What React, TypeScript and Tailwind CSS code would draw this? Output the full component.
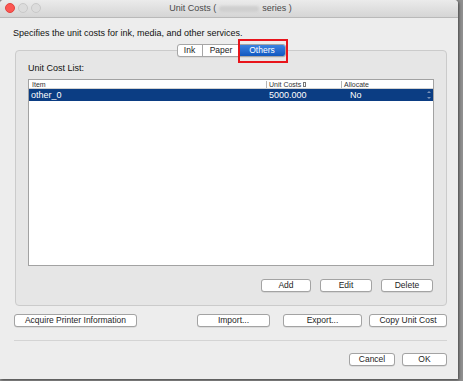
import React from 'react';

const font = { fontFamily: '"Liberation Sans", Arial, sans-serif' };

function MacButton({ label, className = '' }: { label: string; className?: string }) {
  return (
    <button
      className={`h-[13px] rounded-[3px] border border-[#a3a3a3] bg-white text-[8.5px] leading-none text-[#1e1e1e] shadow-[0_0.5px_0_rgba(0,0,0,0.15)] ${className}`}
    >
      {label}
    </button>
  );
}

function Tabs() {
  return (
    <div className="relative z-10 flex justify-center">
      <div className="flex h-[13px] rounded-[3px] border border-[#a6a6a6] bg-white text-[8.5px] leading-none text-[#222] shadow-[0_0.5px_0_rgba(0,0,0,0.12)]">
        <div className="flex w-[25px] items-center justify-center border-r border-[#a6a6a6]">Ink</div>
        <div className="flex w-[37px] items-center justify-center">Paper</div>
        <div className="relative flex w-[45px] items-center justify-center rounded-r-[2px] bg-gradient-to-b from-[#3b82e0] to-[#0f58c0] text-white">
          Others
          {/* red highlight frame */}
          <div className="absolute -left-[2px] -top-[6px] h-[24px] w-[50px] border-2 border-[#e8141b]" />
        </div>
      </div>
    </div>
  );
}

function CostTable() {
  return (
    <div className="h-[187px] border border-[#a2a2a2] bg-white">
      <div className="flex h-[9px] items-center border-b border-[#d2d2d2] text-[7px] leading-none text-[#333]">
        <div className="w-[237px] pl-[3px]">Item</div>
        <div className="flex w-[75px] items-center border-l border-[#b5b5b5] pl-[2px]">
          Unit Costs
          <span className="ml-[2px] inline-block h-[5px] w-[3px] border border-[#777]" />
        </div>
        <div className="flex-1 border-l border-[#b5b5b5] pl-[2px]">Allocate</div>
      </div>
      <div className="relative flex h-[12px] items-center bg-[#0b3d83] text-[9px] leading-none text-white">
        <div className="w-[237px] pl-[2px]">other_0</div>
        <div className="w-[75px] pl-[3px]">5000.000</div>
        <div className="flex-1 pl-[9px]">No</div>
        <svg className="absolute right-[2px] top-[1px]" width="4" height="10" viewBox="0 0 4 10">
          <path d="M0 3 L2 1 L4 3 Z" fill="#7d93b8" />
          <path d="M0 7 L2 9 L4 7 Z" fill="#7d93b8" />
        </svg>
      </div>
    </div>
  );
}

export default function App() {
  return (
    <div className="h-[381px] w-[463px] bg-[#8f8f8f]" style={font}>
      <div className="flex h-[379px] w-[458px] flex-col overflow-hidden rounded-t-[4px] bg-[#ededed] shadow-[1px_1px_3px_rgba(0,0,0,0.5)]">
        {/* Title bar */}
        <div className="relative flex h-[18px] shrink-0 items-center justify-center border-b border-[#b9b9b9] bg-gradient-to-b from-[#ebebeb] to-[#d5d5d5] text-[9px] leading-none text-[#4a4a4a]">
          <div className="absolute left-[5px] top-[3px] flex gap-[3px]">
            <span className="h-[10px] w-[10px] rounded-full border border-[#e0443e] bg-[#fc5753]" />
            <span className="h-[10px] w-[10px] rounded-full border border-[#c8c8c8] bg-[#dcdcdc]" />
            <span className="h-[10px] w-[10px] rounded-full border border-[#c8c8c8] bg-[#dcdcdc]" />
          </div>
          <div className="ml-[3px] flex items-center">
            <span>Unit Costs (</span>
            <span className="mx-[3px] inline-block h-[6px] w-[40px] rounded-sm bg-[#cfcfcf] blur-[1px]" />
            <span>series )</span>
          </div>
        </div>

        {/* Body */}
        <div className="flex flex-1 flex-col pl-[14px] pr-[11px]">
          <p className="mt-[10px] -ml-[1px] text-[9px] leading-[11px] text-[#111]">
            Specifies the unit costs for ink, media, and other services.
          </p>

          <div className="ml-[1px] mt-[5px]">
            <Tabs />
            <div className="-mt-[7px] rounded-[4px] border border-[#cbcbcb] bg-[#e6e6e6] px-[12px] pb-[13px] pt-[12px]">
              <div className="text-[9px] leading-[11px] text-[#111]">Unit Cost List:</div>
              <div className="mt-[5px]">
                <CostTable />
              </div>
              <div className="mt-[13px] flex justify-end gap-[9px] pr-[1px]">
                <MacButton label="Add" className="w-[50px]" />
                <MacButton label="Edit" className="w-[52px]" />
                <MacButton label="Delete" className="w-[52px]" />
              </div>
            </div>
          </div>

          <div className="mt-[8px] flex items-center">
            <MacButton label="Acquire Printer Information" className="w-[123px]" />
            <div className="flex-1" />
            <MacButton label="Import..." className="w-[73px]" />
            <MacButton label="Export..." className="ml-[13px] w-[79px]" />
            <MacButton label="Copy Unit Cost" className="ml-[7px] w-[78px]" />
          </div>

          <div className="mt-[13px] h-[2px] border-t border-[#d4d4d4] border-b-white" />

          <div className="mt-[11px] flex justify-end gap-[7px]">
            <MacButton label="Cancel" className="w-[46px]" />
            <MacButton label="OK" className="w-[45px]" />
          </div>
        </div>
      </div>
    </div>
  );
}
